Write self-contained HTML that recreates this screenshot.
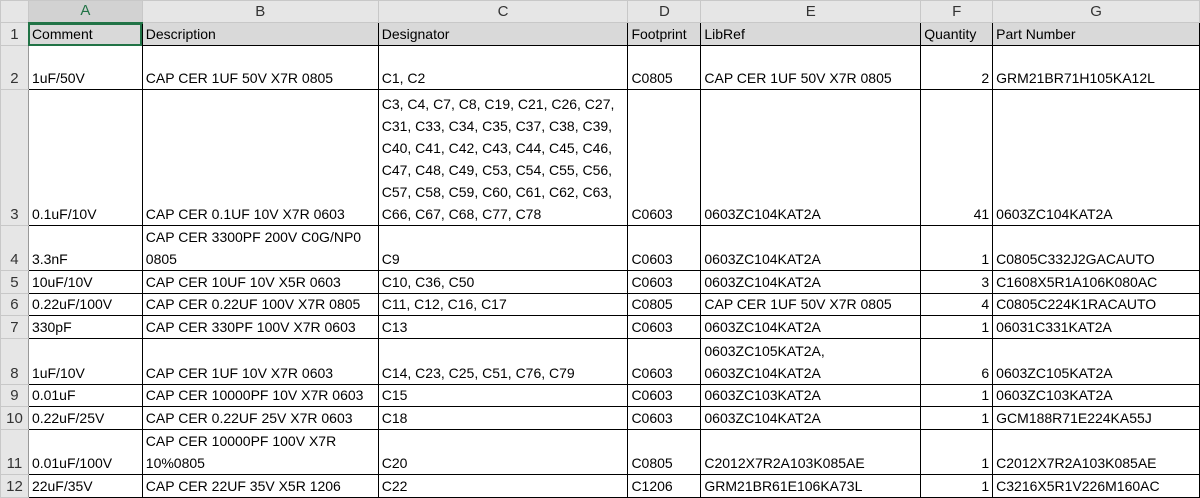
<!DOCTYPE html>
<html><head><style>
body{margin:0;background:#fff;font-family:"Liberation Sans",Arial,sans-serif;font-size:14px;color:#000;}
table{border-collapse:collapse;table-layout:fixed;position:absolute;left:0;top:0;}
td{padding:0 3px;vertical-align:bottom;white-space:nowrap;overflow:hidden;line-height:21px;border:1px solid #000;}
td.w{white-space:normal;line-height:22px}
td.r{text-align:right}
.ch td{background:#e6e6e6;border:1px solid #c8c8c8;text-align:center;vertical-align:middle;color:#333;font-size:15px;line-height:18px}
.ch td.sel{background:#d2d2d2;color:#217346;border-bottom:2px solid #217346}
td.rh{background:#e6e6e6;border:1px solid #c8c8c8;border-right:1px solid #999;text-align:center;color:#333;padding:0;font-size:15px}
tr.h td:not(.rh){background:#d9d9d9}
td.a1{outline:2px solid #217346;outline-offset:-2px}
</style></head><body>
<table>
<colgroup><col style="width:28px"><col style="width:114px"><col style="width:236px"><col style="width:250px"><col style="width:73px"><col style="width:220px"><col style="width:72px"><col style="width:207px"></colgroup>
<tr class="ch" style="height:22px"><td style="background:#e6e6e6"></td><td class="sel">A</td><td>B</td><td>C</td><td>D</td><td>E</td><td>F</td><td>G</td></tr>
<tr class="h" style="height:23px"><td class="rh">1</td><td class="a1">Comment</td><td>Description</td><td>Designator</td><td>Footprint</td><td>LibRef</td><td>Quantity</td><td>Part Number</td></tr>
<tr style="height:44px"><td class="rh">2</td><td>1uF/50V</td><td>CAP CER 1UF 50V X7R 0805</td><td>C1, C2</td><td>C0805</td><td>CAP CER 1UF 50V X7R 0805</td><td class="r">2</td><td>GRM21BR71H105KA12L</td></tr>
<tr style="height:136px"><td class="rh">3</td><td>0.1uF/10V</td><td>CAP CER 0.1UF 10V X7R 0603</td><td class="w">C3, C4, C7, C8, C19, C21, C26, C27,<br>C31, C33, C34, C35, C37, C38, C39,<br>C40, C41, C42, C43, C44, C45, C46,<br>C47, C48, C49, C53, C54, C55, C56,<br>C57, C58, C59, C60, C61, C62, C63,<br>C66, C67, C68, C77, C78</td><td>C0603</td><td>0603ZC104KAT2A</td><td class="r">41</td><td>0603ZC104KAT2A</td></tr>
<tr style="height:45px"><td class="rh">4</td><td>3.3nF</td><td class="w">CAP CER 3300PF 200V C0G/NP0<br>0805</td><td>C9</td><td>C0603</td><td>0603ZC104KAT2A</td><td class="r">1</td><td>C0805C332J2GACAUTO</td></tr>
<tr style="height:23px"><td class="rh">5</td><td>10uF/10V</td><td>CAP CER 10UF 10V X5R 0603</td><td>C10, C36, C50</td><td>C0603</td><td>0603ZC104KAT2A</td><td class="r">3</td><td>C1608X5R1A106K080AC</td></tr>
<tr style="height:22px"><td class="rh">6</td><td>0.22uF/100V</td><td>CAP CER 0.22UF 100V X7R 0805</td><td>C11, C12, C16, C17</td><td>C0805</td><td>CAP CER 1UF 50V X7R 0805</td><td class="r">4</td><td>C0805C224K1RACAUTO</td></tr>
<tr style="height:23px"><td class="rh">7</td><td>330pF</td><td>CAP CER 330PF 100V X7R 0603</td><td>C13</td><td>C0603</td><td>0603ZC104KAT2A</td><td class="r">1</td><td>06031C331KAT2A</td></tr>
<tr style="height:46px"><td class="rh">8</td><td>1uF/10V</td><td>CAP CER 1UF 10V X7R 0603</td><td>C14, C23, C25, C51, C76, C79</td><td>C0603</td><td class="w">0603ZC105KAT2A,<br>0603ZC104KAT2A</td><td class="r">6</td><td>0603ZC105KAT2A</td></tr>
<tr style="height:22px"><td class="rh">9</td><td>0.01uF</td><td>CAP CER 10000PF 10V X7R 0603</td><td>C15</td><td>C0603</td><td>0603ZC103KAT2A</td><td class="r">1</td><td>0603ZC103KAT2A</td></tr>
<tr style="height:23px"><td class="rh">10</td><td>0.22uF/25V</td><td>CAP CER 0.22UF 25V X7R 0603</td><td>C18</td><td>C0603</td><td>0603ZC104KAT2A</td><td class="r">1</td><td>GCM188R71E224KA55J</td></tr>
<tr style="height:45px"><td class="rh">11</td><td>0.01uF/100V</td><td class="w">CAP CER 10000PF 100V X7R<br>10%0805</td><td>C20</td><td>C0805</td><td>C2012X7R2A103K085AE</td><td class="r">1</td><td>C2012X7R2A103K085AE</td></tr>
<tr style="height:23px"><td class="rh">12</td><td>22uF/35V</td><td>CAP CER 22UF 35V X5R 1206</td><td>C22</td><td>C1206</td><td>GRM21BR61E106KA73L</td><td class="r">1</td><td>C3216X5R1V226M160AC</td></tr>
</table>
</body></html>
